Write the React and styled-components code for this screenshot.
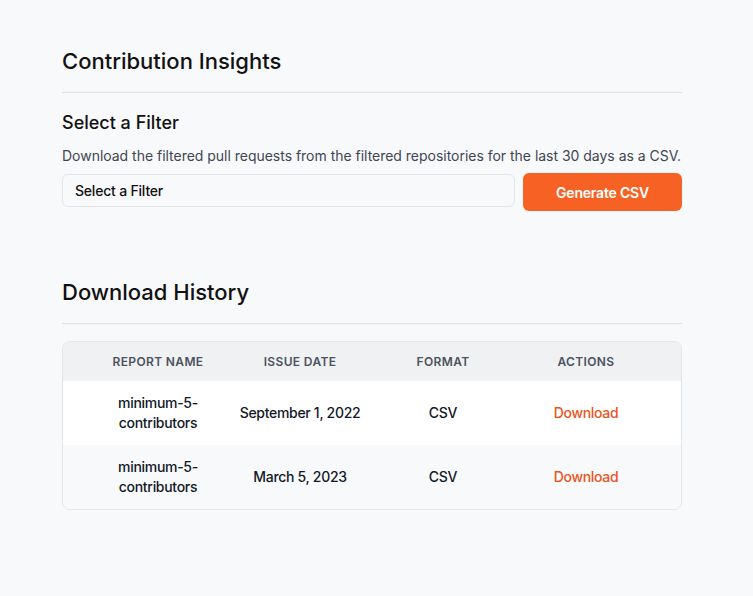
import React from 'react'
import styled, { createGlobalStyle } from 'styled-components'

const GlobalStyle = createGlobalStyle`
  body {
    margin: 0;
    background: #f8f9fb;
    font-family: Inter, "Noto Sans", sans-serif;
    color: #111827;
  }
`

const Page = styled.div`
  width: 620px;
  padding: 47px 0 40px 62px;
`

const Title = styled.h2`
  margin: 0;
  font-size: 22px;
  line-height: 28px;
  font-weight: 500;
  color: #111;
`

const Divider = styled.hr`
  margin: 17px 0 0;
  border: 0;
  border-top: 1px solid #dcdfe3;
`

const Subtitle = styled.h3`
  margin: 18px 0 0;
  font-size: 18px;
  line-height: 24px;
  font-weight: 500;
  color: #111;
`

const Description = styled.p`
  margin: 11px 0 0;
  font-size: 14px;
  line-height: 20px;
  letter-spacing: -0.02px;
  white-space: nowrap;
  color: #3f4653;
`

const FilterRow = styled.div`
  display: flex;
  align-items: flex-start;
  gap: 8px;
  margin-top: 7px;
`

const FilterInput = styled.div`
  flex: 1;
  height: 33px;
  margin-top: 1px;
  box-sizing: border-box;
  border: 1px solid #e3e5e8;
  border-radius: 6px;
  padding: 0 12px;
  display: flex;
  align-items: center;
  font-size: 14px;
  font-weight: 500;
  letter-spacing: -0.2px;
  color: #111;
`

const Button = styled.button`
  width: 159px;
  height: 38px;
  border: 0;
  border-radius: 6px;
  background: #f76123;
  color: #fff;
  font-family: inherit;
  font-size: 14px;
  font-weight: 600;
  letter-spacing: -0.2px;
`

const HistoryTitle = styled(Title)`
  margin-top: 67px;
`

const Table = styled.div`
  margin-top: 17px;
  border: 1px solid #e3e5e8;
  border-radius: 8px;
  overflow: hidden;
`

const Row = styled.div`
  display: grid;
  grid-template-columns: 130px 154px 132px 154px;
  padding-left: 30px;
  align-items: center;
  min-height: ${p => (p.$header ? '39px' : '64px')};
  background: ${p => (p.$header ? '#f0f1f3' : p.$striped ? '#f8f9fb' : '#fff')};
`

const HeadCell = styled.div`
  text-align: center;
  font-size: 12px;
  font-weight: 600;
  letter-spacing: 0.03em;
  text-transform: uppercase;
  color: #4b5260;
`

const Cell = styled.div`
  text-align: center;
  font-size: 14px;
  line-height: 20px;
  font-weight: 450;
  letter-spacing: -0.3px;
  color: #111827;
  padding: 12px 12px;
`

const DownloadLink = styled.a`
  color: #e9541c;
  font-weight: 500;
  cursor: pointer;
`

const reports = [
  { name: 'minimum-5-contributors', date: 'September 1, 2022', format: 'CSV' },
  { name: 'minimum-5-contributors', date: 'March 5, 2023', format: 'CSV' },
]

export default function App() {
  return (
    <>
      <GlobalStyle />
      <Page>
        <Title>Contribution Insights</Title>
        <Divider />
        <Subtitle>Select a Filter</Subtitle>
        <Description>
          Download the filtered pull requests from the filtered repositories for the last 30 days as a CSV.
        </Description>
        <FilterRow>
          <FilterInput>Select a Filter</FilterInput>
          <Button>Generate CSV</Button>
        </FilterRow>

        <HistoryTitle>Download History</HistoryTitle>
        <Divider />
        <Table>
          <Row $header>
            <HeadCell>Report Name</HeadCell>
            <HeadCell>Issue Date</HeadCell>
            <HeadCell>Format</HeadCell>
            <HeadCell>Actions</HeadCell>
          </Row>
          {reports.map((r, i) => (
            <Row key={i} $striped={i % 2 === 1}>
              <Cell>{r.name}</Cell>
              <Cell>{r.date}</Cell>
              <Cell>{r.format}</Cell>
              <Cell>
                <DownloadLink>Download</DownloadLink>
              </Cell>
            </Row>
          ))}
        </Table>
      </Page>
    </>
  )
}
